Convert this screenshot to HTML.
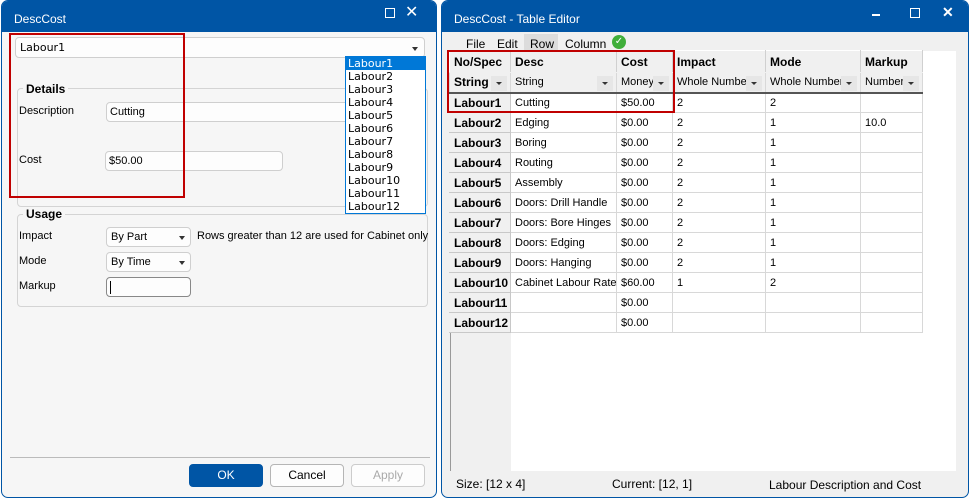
<!DOCTYPE html>
<html><head><style>
*{box-sizing:border-box;margin:0;padding:0}
body{width:969px;height:499px;background:#fff;position:relative;overflow:hidden;font-family:"Liberation Sans",sans-serif;font-size:11px;color:#000}
.a{position:absolute;white-space:nowrap}
.win{position:absolute;border:1px solid #0055a5;background:#f6f6f6;border-radius:7px;overflow:hidden}
.tb{position:absolute;left:0;right:0;top:0;height:31px;background:#0055a5;color:#fff;font-size:12px}
.tb span{position:absolute;left:12px;top:11px}
.box{position:absolute;background:#fdfdfd;border:1px solid #cfcfcf;border-radius:4px}
.arr{position:absolute;width:0;height:0;border-left:3px solid transparent;border-right:3px solid transparent;border-top:4px solid #333}
.grp{position:absolute;border:1px solid #d4d4d4;border-radius:4px}
.gl{position:absolute;background:#f6f6f6;font-weight:bold;font-size:12px;padding:0 3px}
.btn{position:absolute;height:23px;border:1px solid #b5b5b5;border-radius:4px;background:#fdfdfd;text-align:center;line-height:21px;font-size:12px}
.dd div{height:13px;line-height:13px;padding-left:2px;font-family:"DejaVu Sans",sans-serif;font-size:11px}
table{border-collapse:collapse;table-layout:fixed;position:absolute;left:449px;top:50px;font-size:11px;width:473px}
td{border:1px solid #d8d8d8;height:20px;padding:0 0 0 4px;white-space:nowrap;overflow:hidden;background:#fff;vertical-align:middle}
td.h{background:#f0f0f0;font-weight:bold;font-size:12px;border-color:#fff #c8c8c8 #c8c8c8 #f0f0f0}
tr.t1 td{background:#f0f0f0;font-weight:bold;font-size:12px;height:22px;border-color:#fff #d0d0d0 #f0f0f0 #fff}
tr.t2 td{background:#f0f0f0;height:20px;border-bottom:2px solid #555;position:relative}
.s{display:inline-block;width:16px;height:15px;background:#e6e6e6;position:absolute;right:3px;top:3px}
.s:after{content:"";position:absolute;left:5px;top:6px;border-left:3px solid transparent;border-right:3px solid transparent;border-top:3px solid #333}
</style></head><body>

<div class="win" style="left:1px;top:0;width:436px;height:498px">
 <div class="tb"><span>DescCost</span>
  <div class="a" style="left:383px;top:7px;width:10px;height:10px;border:1px solid #fff"></div>
  <div class="a" style="left:403px;top:1px;font-size:16px">✕</div>
 </div>
 <div class="box" style="left:13px;top:36px;width:410px;height:21px"><span class="a" style="left:4px;top:3px;font-family:'DejaVu Sans',sans-serif;font-size:11px">Labour1</span><div class="arr" style="left:396px;top:9px"></div></div>
 <div class="grp" style="left:15px;top:87px;width:411px;height:119px"></div>
 <div class="gl" style="left:21px;top:81px">Details</div>
 <div class="a" style="left:17px;top:104px">Description</div>
 <div class="box" style="left:104px;top:101px;width:250px;height:20px"><span class="a" style="left:3px;top:3px">Cutting</span></div>
 <div class="a" style="left:17px;top:153px">Cost</div>
 <div class="box" style="left:103px;top:150px;width:178px;height:20px"><span class="a" style="left:3px;top:3px">$50.00</span></div>
 <div class="grp" style="left:15px;top:213px;width:411px;height:93px"></div>
 <div class="gl" style="left:21px;top:206px">Usage</div>
 <div class="a" style="left:17px;top:229px">Impact</div>
 <div class="box" style="left:104px;top:226px;width:85px;height:20px"><span class="a" style="left:4px;top:3px">By Part</span><div class="arr" style="left:72px;top:8px"></div></div>
 <div class="a" style="left:195px;top:229px">Rows greater than 12 are used for Cabinet only</div>
 <div class="a" style="left:17px;top:254px">Mode</div>
 <div class="box" style="left:104px;top:251px;width:85px;height:20px"><span class="a" style="left:4px;top:3px">By Time</span><div class="arr" style="left:72px;top:8px"></div></div>
 <div class="a" style="left:17px;top:279px">Markup</div>
 <div class="box" style="left:104px;top:276px;width:85px;height:20px;border-color:#888"><div class="a" style="left:3px;top:3px;width:1px;height:13px;background:#000"></div></div>
 <div class="a" style="left:8px;top:456px;width:420px;height:1px;background:#bbb"></div>
 <div class="btn" style="left:187px;top:463px;width:74px;background:#0055a5;border-color:#0055a5;color:#fff">OK</div>
 <div class="btn" style="left:268px;top:463px;width:74px">Cancel</div>
 <div class="btn" style="left:349px;top:463px;width:74px;color:#aaa;border-color:#ccc">Apply</div>
 <div class="a" style="left:7px;top:32px;width:176px;height:165px;border:2px solid #c00000"></div>
 <div class="dd a" style="left:343px;top:55px;width:81px;height:158px;background:#fff;border:1px solid #0078d7">
  <div style="background:#0078d7;color:#fff">Labour1</div><div>Labour2</div><div>Labour3</div><div>Labour4</div><div>Labour5</div><div>Labour6</div><div>Labour7</div><div>Labour8</div><div>Labour9</div><div>Labour10</div><div>Labour11</div><div>Labour12</div>
 </div>
</div>

<div class="win" style="left:441px;top:0;width:528px;height:498px;background:#f0f0f0">
 <div class="tb"><span>DescCost - Table Editor</span>
  <div class="a" style="left:430px;top:13px;width:8px;height:2px;background:#fff"></div>
  <div class="a" style="left:468px;top:7px;width:10px;height:10px;border:1px solid #fff"></div>
  <div class="a" style="left:500px;top:3px;font-size:14px;font-weight:bold">✕</div>
 </div>
 <div class="a" style="left:24px;top:36px;font-size:12px">File</div>
 <div class="a" style="left:55px;top:36px;font-size:12px">Edit</div>
 <div class="a" style="left:82px;top:33px;width:34px;height:17px;background:#dcdcdc"></div>
 <div class="a" style="left:88px;top:36px;font-size:12px">Row</div>
 <div class="a" style="left:123px;top:36px;font-size:12px">Column</div>
 <div class="a" style="left:170px;top:34px;width:14px;height:14px;border-radius:50%;background:#3fae3a;color:#fff;font-size:10px;text-align:center;line-height:14px">✓</div>
 <div class="a" style="left:8px;top:50px;width:506px;height:420px;background:#fff"></div>
 <div class="a" style="left:8px;top:50px;width:61px;height:420px;background:#f0f0f0;border-left:1px solid #999"></div>
 <div class="a" style="left:14px;top:476px;font-size:12px">Size: [12 x 4]</div>
 <div class="a" style="left:170px;top:476px;font-size:12px">Current: [12, 1]</div>
 <div class="a" style="left:327px;top:477px;font-size:12px">Labour Description and Cost</div>
</div>

<table>
<colgroup><col style="width:61px"><col style="width:106px"><col style="width:56px"><col style="width:93px"><col style="width:95px"><col style="width:62px"></colgroup>
<tr class="t1"><td>No/Spec</td><td>Desc</td><td>Cost</td><td>Impact</td><td>Mode</td><td>Markup</td></tr>
<tr class="t2"><td><b style="font-size:12px">String</b><i class="s"></i></td><td>String<i class="s"></i></td><td>Money<i class="s"></i></td><td>Whole Number<i class="s"></i></td><td>Whole Number<i class="s"></i></td><td>Number<i class="s"></i></td></tr>
<tr><td class="h">Labour1</td><td>Cutting</td><td>$50.00</td><td>2</td><td>2</td><td></td></tr>
<tr><td class="h">Labour2</td><td>Edging</td><td>$0.00</td><td>2</td><td>1</td><td>10.0</td></tr>
<tr><td class="h">Labour3</td><td>Boring</td><td>$0.00</td><td>2</td><td>1</td><td></td></tr>
<tr><td class="h">Labour4</td><td>Routing</td><td>$0.00</td><td>2</td><td>1</td><td></td></tr>
<tr><td class="h">Labour5</td><td>Assembly</td><td>$0.00</td><td>2</td><td>1</td><td></td></tr>
<tr><td class="h">Labour6</td><td>Doors: Drill Handle</td><td>$0.00</td><td>2</td><td>1</td><td></td></tr>
<tr><td class="h">Labour7</td><td>Doors: Bore Hinges</td><td>$0.00</td><td>2</td><td>1</td><td></td></tr>
<tr><td class="h">Labour8</td><td>Doors: Edging</td><td>$0.00</td><td>2</td><td>1</td><td></td></tr>
<tr><td class="h">Labour9</td><td>Doors: Hanging</td><td>$0.00</td><td>2</td><td>1</td><td></td></tr>
<tr><td class="h">Labour10</td><td>Cabinet Labour Rate</td><td>$60.00</td><td>1</td><td>2</td><td></td></tr>
<tr><td class="h">Labour11</td><td></td><td>$0.00</td><td></td><td></td><td></td></tr>
<tr><td class="h">Labour12</td><td></td><td>$0.00</td><td></td><td></td><td></td></tr>
</table>
<div class="a" style="left:447px;top:50px;width:228px;height:63px;border:2px solid #c00000"></div>
</body></html>
